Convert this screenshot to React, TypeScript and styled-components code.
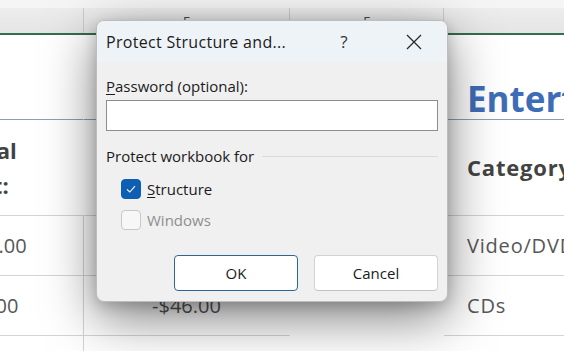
import React from 'react'
import styled, { createGlobalStyle, css } from 'styled-components'

const GlobalStyle = createGlobalStyle`
  html, body {
    margin: 0;
    padding: 0;
  }
  body {
    width: 564px;
    height: 351px;
    overflow: hidden;
    background: #ffffff;
    font-family: 'Open Sans', 'Noto Sans', sans-serif;
  }
`

const COLUMNS = '204px 206px 154px 260px'

const Window = styled.div`
  position: relative;
  width: 564px;
  height: 351px;
  overflow: hidden;
  display: flex;
  flex-direction: column;
  background: #ffffff;
`

const RibbonEdge = styled.div`
  flex: none;
  height: 8px;
  background: #f5f5f5;
`

const ColumnHeader = styled.div`
  flex: none;
  height: 25px;
  margin-left: -120px;
  display: grid;
  grid-template-columns: ${COLUMNS};
  background: linear-gradient(#ededed, #e5e5e5);
  border-bottom: 2px solid #336e4e;
`

const HeaderCell = styled.div`
  display: flex;
  align-items: center;
  justify-content: center;
  border-right: 1px solid #cdcdcd;
  font-size: 13px;
  color: #474747;
`

const Sheet = styled.div`
  flex: none;
  margin-left: -120px;
  display: grid;
  grid-template-columns: ${COLUMNS};
  grid-template-rows: 85px 96px 60px 60px 60px;
`

type Rule = 'blue' | 'gray' | 'none'
type Variant = 'title' | 'head' | 'value'

const Cell = styled.div<{ $rule?: Rule; $vline?: boolean; $align?: 'center' | 'left'; $variant?: Variant }>`
  display: flex;
  flex-direction: column;
  justify-content: center;
  align-items: ${(p) => (p.$align === 'left' ? 'flex-start' : 'center')};
  padding-left: ${(p) => (p.$align === 'left' ? '23px' : '0')};
  white-space: nowrap;
  box-sizing: border-box;
  border-bottom: 1px solid
    ${(p) => (p.$rule === 'blue' ? '#8a9fbb' : p.$rule === 'gray' ? '#d4d4d4' : 'transparent')};
  border-right: 1px solid ${(p) => (p.$vline ? '#d4d4d4' : 'transparent')};
  color: #575757;
  font-size: 20px;
  line-height: 28px;
  letter-spacing: ${(p) => (p.$align === 'left' ? '0.8px' : '0')};
  ${(p) =>
    p.$variant === 'title' &&
    css`
      justify-content: flex-end;
      color: #3e6db7;
      font-weight: 700;
      font-size: 35px;
      line-height: 40px;
      letter-spacing: 0;
    `}
  ${(p) =>
    p.$variant === 'head' &&
    css`
      color: #434343;
      font-weight: 700;
      font-size: 22px;
      line-height: 35px;
    `}
`

const Dialog = styled.div`
  position: absolute;
  left: 96px;
  top: 20px;
  width: 352px;
  height: 282px;
  box-sizing: border-box;
  display: flex;
  flex-direction: column;
  background: #f0f0f0;
  border: 1px solid #bdbdbd;
  border-radius: 8px;
  overflow: hidden;
  box-shadow: 0 16px 52px rgba(0, 0, 0, 0.5), 0 4px 14px rgba(0, 0, 0, 0.18);
  font-family: 'Open Sans', 'Noto Sans', sans-serif;
  color: #1b1b1b;
`

const TitleBar = styled.div`
  flex: none;
  height: 41px;
  display: flex;
  align-items: center;
  padding-left: 9px;
  background: #eef3f8;
  font-size: 16px;
  letter-spacing: 0.3px;
`

const Title = styled.div`
  flex: 1;
  white-space: nowrap;
`

const TitleButton = styled.div<{ $w: number }>`
  width: ${(p) => p.$w}px;
  height: 41px;
  display: flex;
  align-items: center;
  justify-content: center;
  font-size: 17px;
  color: #333;
`

const Body = styled.div`
  flex: 1;
  display: flex;
  flex-direction: column;
  padding: 14px 9px 10px 9px;
  font-size: 15px;
`

const Label = styled.div`
  line-height: 20px;
`

const Key = styled.span`
  text-decoration: underline;
  text-underline-offset: 2px;
  text-decoration-thickness: 1px;
`

const PasswordInput = styled.div`
  margin-top: 4px;
  height: 31px;
  box-sizing: border-box;
  background: #ffffff;
  border: 1px solid #8d8d8d;
`

const GroupTitle = styled.div`
  margin-top: 15px;
  display: flex;
  align-items: center;
  gap: 8px;
  line-height: 20px;
  &::after {
    content: '';
    flex: 1;
    height: 1px;
    background: #dadada;
  }
`

const Options = styled.div`
  margin-top: 13px;
  padding-left: 15px;
  display: flex;
  flex-direction: column;
  gap: 11px;
`

const Option = styled.div<{ $disabled?: boolean }>`
  display: flex;
  align-items: center;
  gap: 6px;
  height: 20px;
  color: ${(p) => (p.$disabled ? '#8e8e8e' : '#1b1b1b')};
`

const Box = styled.div<{ $checked?: boolean }>`
  width: 20px;
  height: 20px;
  box-sizing: border-box;
  border-radius: 4px;
  display: flex;
  align-items: center;
  justify-content: center;
  background: ${(p) => (p.$checked ? '#0e5fb3' : '#f7f7f7')};
  border: 1px solid ${(p) => (p.$checked ? '#0e5fb3' : '#c9c9c9')};
`

const Buttons = styled.div`
  margin-top: 25px;
  display: flex;
  justify-content: flex-end;
  gap: 16px;
`

const Button = styled.div<{ $primary?: boolean }>`
  width: 124px;
  height: 36px;
  box-sizing: border-box;
  display: flex;
  align-items: center;
  justify-content: center;
  background: #ffffff;
  border-radius: 4px;
  border: 1px solid ${(p) => (p.$primary ? '#2f6595' : '#d2d2d2')};
  border-bottom-color: ${(p) => (p.$primary ? '#2f6595' : '#c2c2c2')};
  font-size: 15px;
  color: #1b1b1b;
`

export default function App() {
  return (
    <>
      <GlobalStyle />
      <Window>
        <RibbonEdge />
        <ColumnHeader>
          <HeaderCell />
          <HeaderCell>E</HeaderCell>
          <HeaderCell>F</HeaderCell>
          <HeaderCell />
        </ColumnHeader>
        <Sheet>
          <Cell $rule='blue' />
          <Cell $rule='blue' />
          <Cell $rule='blue' />
          <Cell $rule='blue' $align='left' $variant='title'>
            Entertainment
          </Cell>

          <Cell $rule='gray' $variant='head'>
            <span>Actual</span>
            <span>Cost:</span>
          </Cell>
          <Cell $rule='gray' />
          <Cell $rule='none' />
          <Cell $rule='gray' $align='left' $variant='head'>
            Category
          </Cell>

          <Cell $rule='gray' $vline>
            $1,200.00
          </Cell>
          <Cell $rule='gray' />
          <Cell $rule='none' />
          <Cell $rule='gray' $align='left'>
            Video/DVD
          </Cell>

          <Cell $rule='gray' $vline>
            $240.00
          </Cell>
          <Cell $rule='gray'>-$46.00</Cell>
          <Cell $rule='none' />
          <Cell $rule='gray' $align='left'>
            CDs
          </Cell>

          <Cell $rule='none' $vline />
          <Cell $rule='none' />
          <Cell $rule='none' />
          <Cell $rule='none' />
        </Sheet>

        <Dialog>
          <TitleBar>
            <Title>Protect Structure and...</Title>
            <TitleButton $w={74}>?</TitleButton>
            <TitleButton $w={66}>
              <svg width='16' height='16' viewBox='0 0 16 16'>
                <path d='M1 1 L15 15 M15 1 L1 15' stroke='#2b2b2b' strokeWidth='1.3' fill='none' />
              </svg>
            </TitleButton>
          </TitleBar>
          <Body>
            <Label>
              <Key>P</Key>assword (optional):
            </Label>
            <PasswordInput />
            <GroupTitle>Protect workbook for</GroupTitle>
            <Options>
              <Option>
                <Box $checked>
                  <svg width='12' height='12' viewBox='0 0 12 12'>
                    <path d='M2 6.3 L4.8 9 L10 3.2' stroke='#ffffff' strokeWidth='1.1' fill='none' />
                  </svg>
                </Box>
                <span>
                  <Key>S</Key>tructure
                </span>
              </Option>
              <Option $disabled>
                <Box />
                <span>Windows</span>
              </Option>
            </Options>
            <Buttons>
              <Button $primary>OK</Button>
              <Button>Cancel</Button>
            </Buttons>
          </Body>
        </Dialog>
      </Window>
    </>
  )
}
